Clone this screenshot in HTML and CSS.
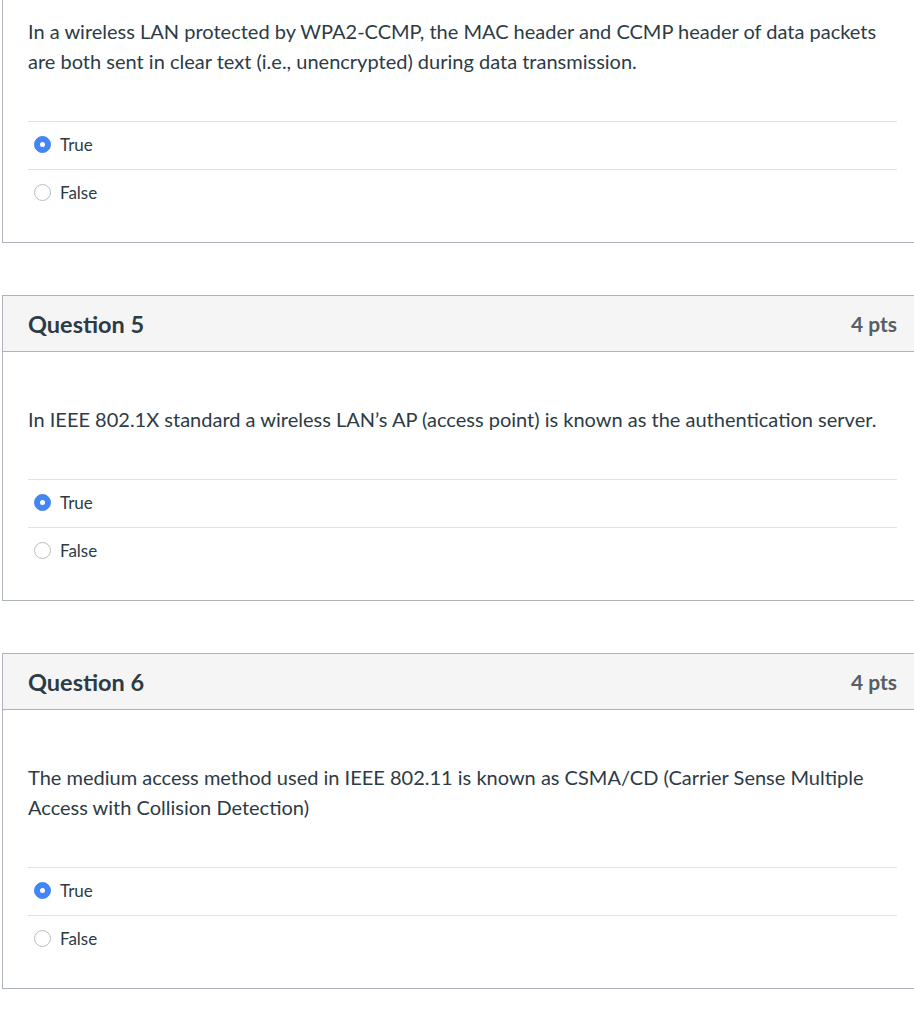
FILE: index.html
```html
<!DOCTYPE html>
<html lang="en">
<head>
<meta charset="utf-8">
<title>Quiz</title>
<link rel="stylesheet" href="styles.css">
</head>
<body>
<div class="quiz">
  <section class="card card-clipped">
    <div class="body">
      <p class="question-text">In a wireless LAN protected by WPA2-CCMP, the MAC header and CCMP header of data packets are both sent in clear text (i.e., unencrypted) during data transmission.</p>
      <div class="answers">
        <label class="answer"><span class="radio checked"></span><span class="answer-label">True</span></label>
        <label class="answer"><span class="radio"></span><span class="answer-label">False</span></label>
      </div>
    </div>
  </section>

  <section class="card">
    <div class="header">
      <h2 class="title">Question 5</h2>
      <span class="pts">4 pts</span>
    </div>
    <div class="body">
      <p class="question-text">In IEEE 802.1X standard a wireless LAN’s AP (access point) is known as the authentication server.</p>
      <div class="answers">
        <label class="answer"><span class="radio checked"></span><span class="answer-label">True</span></label>
        <label class="answer"><span class="radio"></span><span class="answer-label">False</span></label>
      </div>
    </div>
  </section>

  <section class="card">
    <div class="header">
      <h2 class="title">Question 6</h2>
      <span class="pts">4 pts</span>
    </div>
    <div class="body">
      <p class="question-text">The medium access method used in IEEE 802.11 is known as CSMA/CD (Carrier Sense Multiple Access with Collision Detection)</p>
      <div class="answers">
        <label class="answer"><span class="radio checked"></span><span class="answer-label">True</span></label>
        <label class="answer"><span class="radio"></span><span class="answer-label">False</span></label>
      </div>
    </div>
  </section>
</div>
</body>
</html>
```
FILE: styles.css
```css
html, body {
  margin: 0;
  padding: 0;
  background: #ffffff;
  overflow: hidden;
}
body {
  font-family: Lato, "Open Sans", sans-serif;
  color: #2d3b45;
}
.quiz {
  display: flex;
  flex-direction: column;
  gap: 52px;
  padding-left: 2px;
}
.card {
  width: 920px;
  border: 1px solid #adb3b8;
  background: #fff;
}
.card-clipped {
  margin-top: -37px;
}
.header {
  height: 56px;
  box-sizing: border-box;
  display: flex;
  justify-content: space-between;
  align-items: center;
  padding: 0 26px 0 25px;
  background: #f5f5f5;
  border-bottom: 1px solid #adb3b8;
}
.title {
  margin: 0;
  font-size: 23.5px;
  font-weight: 700;
  color: #2d3b45;
}
.pts {
  font-size: 21px;
  font-weight: 700;
  color: #565f66;
}
.body {
  padding: 52px 0 25px 25px;
  width: 869px;
}
.question-text {
  margin: 0;
  font-size: 20px;
  line-height: 30px;
}
.answers {
  margin-top: 45px;
  display: flex;
  flex-direction: column;
}
.answer {
  display: flex;
  align-items: center;
  height: 48px;
  box-sizing: border-box;
  border-top: 1px solid #e0e3e6;
  padding-left: 6px;
  padding-bottom: 3px;
  gap: 9px;
}
.radio {
  width: 17px;
  height: 17px;
  box-sizing: border-box;
  border-radius: 50%;
  border: 1px solid #b8bdc2;
  background: #fff;
  display: flex;
  align-items: center;
  justify-content: center;
}
.radio.checked {
  background: #4285f4;
  border-color: #4285f4;
}
.radio.checked::after {
  content: "";
  width: 5px;
  height: 5px;
  border-radius: 50%;
  background: #fff;
}
.answer-label {
  font-size: 17px;
}
```
